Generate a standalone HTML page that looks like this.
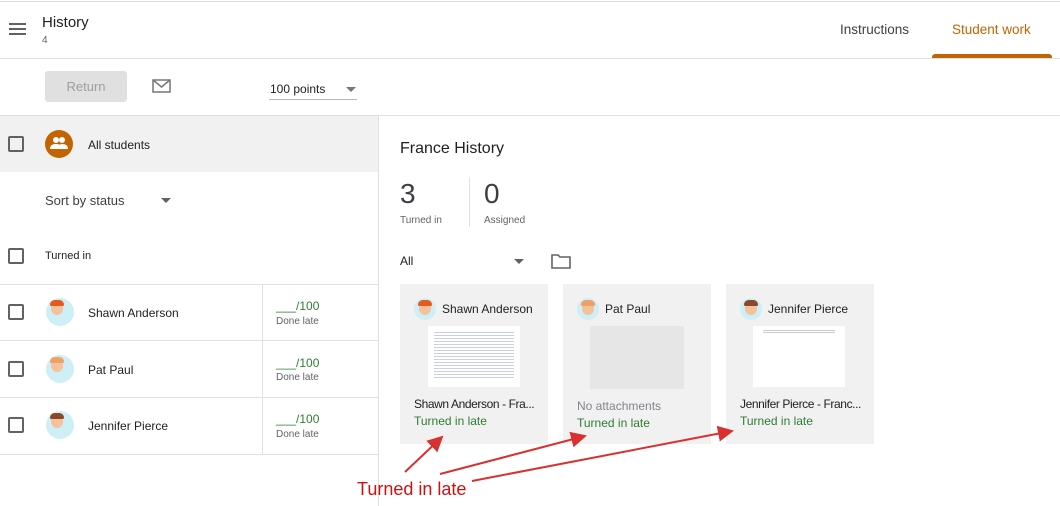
<!DOCTYPE html>
<html><head><meta charset="utf-8"><style>
*{margin:0;padding:0;box-sizing:border-box}
body{width:1060px;height:506px;position:relative;overflow:hidden;background:#fff;font-family:"Liberation Sans",sans-serif;color:#202124}
.a{position:absolute}
.cb{position:absolute;width:16px;height:16px;border:2px solid #5f6368;border-radius:2px}
.t{font-size:12px}
.card{position:absolute;top:284px;width:148px;height:160px;background:#f1f1f1}
.av{position:absolute;width:22px;height:22px;border-radius:50%;background:#cdeff5;overflow:hidden}
.av:before{content:"";position:absolute;left:5px;top:4px;width:12px;height:13px;border-radius:50%;background:#f4c19a}
.av:after{content:"";position:absolute;left:4px;top:2px;width:14px;height:6px;border-radius:7px 7px 2px 2px;background:var(--h)}
.green{color:#2e7d32}
</style></head><body>
<div class="a" style="left:0;top:1px;width:1060px;height:1px;background:#ddd"></div>
<div class="a" style="left:9px;top:23px;width:17px;height:2px;background:#5f6368;box-shadow:0 5px 0 #5f6368,0 10px 0 #5f6368"></div>
<div class="a" style="left:42px;top:14px;font-size:15px">History</div>
<div class="a" style="left:42px;top:35px;font-size:10px;color:#5f6368">4</div>
<div class="a" style="left:840px;top:22px;font-size:13.5px;color:#3c4043">Instructions</div>
<div class="a" style="left:952px;top:22px;font-size:13.5px;color:#c26401">Student work</div>
<div class="a" style="left:932px;top:54px;width:120px;height:4px;background:#c26401;border-radius:3px 3px 0 0"></div>
<div class="a" style="left:0;top:58px;width:1060px;height:1px;background:#e0e0e0"></div>
<div class="a" style="left:45px;top:71px;width:82px;height:31px;background:#e0e0e0;border-radius:3px;color:#9e9e9e;font-size:13px;text-align:center;line-height:31px">Return</div>
<svg class="a" style="left:152px;top:79px" width="19" height="14" viewBox="0 0 19 14"><rect x="1" y="1" width="17" height="12" fill="none" stroke="#777" stroke-width="1.5"/><path d="M1 1l8.5 7L18 1" fill="none" stroke="#777" stroke-width="1.5"/></svg>
<div class="a" style="left:270px;top:82px;font-size:12px">100 points</div>
<div class="a" style="left:346px;top:87px;border:5px solid transparent;border-top-color:#777;border-bottom:0"></div>
<div class="a" style="left:269px;top:99px;width:88px;height:1px;background:#bbb"></div>
<div class="a" style="left:0;top:115px;width:1060px;height:1px;background:#e0e0e0"></div>
<div class="a" style="left:378px;top:115px;width:1px;height:391px;background:#e0e0e0"></div>
<div class="a" style="left:0;top:116px;width:378px;height:56px;background:#f1f1f1"></div>
<div class="cb" style="left:8px;top:136px"></div>
<div class="a" style="left:45px;top:130px;width:28px;height:28px;border-radius:50%;background:#c26401"></div>
<svg class="a" style="left:50px;top:136px" width="18" height="14" viewBox="0 0 18 14"><circle cx="6" cy="4" r="3" fill="#fff"/><circle cx="12" cy="4" r="3" fill="#fff"/><path d="M0 13c0-4 3-5 6-5s6 1 6 5zM8 13c0-4 2-5 4-5 3 0 6 1 6 5z" fill="#fff"/></svg>
<div class="a t" style="left:88px;top:138px">All students</div>
<div class="a" style="left:45px;top:193px;font-size:13px;color:#3c4043">Sort by status</div>
<div class="a" style="left:161px;top:198px;border:5px solid transparent;border-top-color:#5f6368;border-bottom:0"></div>
<div class="cb" style="left:8px;top:248px"></div>
<div class="a t" style="left:45px;top:250px;font-size:11px">Turned in</div>
<div class="a" style="left:0;top:284px;width:378px;height:1px;background:#e0e0e0"></div>
<div class="a" style="left:0;top:340px;width:378px;height:1px;background:#e0e0e0"></div>
<div class="a" style="left:0;top:397px;width:378px;height:1px;background:#e0e0e0"></div>
<div class="a" style="left:0;top:454px;width:378px;height:1px;background:#e0e0e0"></div>
<div class="a" style="left:262px;top:285px;width:1px;height:169px;background:#e0e0e0"></div>
<div class="cb" style="left:8px;top:304px"></div><div class="cb" style="left:8px;top:361px"></div><div class="cb" style="left:8px;top:417px"></div>
<div class="av" style="left:46px;top:298px;width:28px;height:28px;--h:#e65a1e"></div>
<div class="av" style="left:46px;top:355px;width:28px;height:28px;--h:#f0a064"></div>
<div class="av" style="left:46px;top:411px;width:28px;height:28px;--h:#8a4a2a"></div>
<div class="a t" style="left:88px;top:306px">Shawn Anderson</div>
<div class="a t" style="left:88px;top:363px">Pat Paul</div>
<div class="a t" style="left:88px;top:419px">Jennifer Pierce</div>
<div class="a t green" style="left:276px;top:299px">___/100</div><div class="a" style="left:276px;top:316px;font-size:10px;color:#5f6368">Done late</div>
<div class="a t green" style="left:276px;top:356px">___/100</div><div class="a" style="left:276px;top:372px;font-size:10px;color:#5f6368">Done late</div>
<div class="a t green" style="left:276px;top:412px">___/100</div><div class="a" style="left:276px;top:429px;font-size:10px;color:#5f6368">Done late</div>
<div class="a" style="left:400px;top:140px;font-size:16px">France History</div>
<div class="a" style="left:400px;top:178px;font-size:28px;color:#3c4043">3</div>
<div class="a" style="left:400px;top:215px;font-size:10px;color:#5f6368">Turned in</div>
<div class="a" style="left:469px;top:177px;width:1px;height:50px;background:#e0e0e0"></div>
<div class="a" style="left:484px;top:178px;font-size:28px;color:#3c4043">0</div>
<div class="a" style="left:484px;top:215px;font-size:10px;color:#5f6368">Assigned</div>
<div class="a" style="left:400px;top:254px;font-size:12px">All</div>
<div class="a" style="left:514px;top:259px;border:5px solid transparent;border-top-color:#5f6368;border-bottom:0"></div>
<svg class="a" style="left:551px;top:253px" width="20" height="16" viewBox="0 0 20 16"><path d="M1 2h6l2 2h10v11H1z" fill="none" stroke="#5f6368" stroke-width="1.6"/></svg>
<div class="card" style="left:400px"></div><div class="card" style="left:563px"></div><div class="card" style="left:726px"></div>
<div class="av" style="left:414px;top:298px;--h:#e65a1e"></div>
<div class="av" style="left:577px;top:298px;--h:#f0a064"></div>
<div class="av" style="left:740px;top:298px;--h:#8a4a2a"></div>
<div class="a t" style="left:442px;top:302px">Shawn Anderson</div>
<div class="a t" style="left:605px;top:302px">Pat Paul</div>
<div class="a t" style="left:768px;top:302px">Jennifer Pierce</div>
<div class="a" style="left:428px;top:326px;width:92px;height:61px;background:#fff;padding:4px 6px"><div style="height:50px;background:repeating-linear-gradient(#fff 0 2px,#c7cfe0 2px 3px)"></div></div>
<div class="a" style="left:590px;top:326px;width:94px;height:63px;background:#e6e6e6"></div>
<div class="a" style="left:753px;top:326px;width:92px;height:61px;background:#fff;padding:3px 10px"><div style="height:4px;background:repeating-linear-gradient(#fff 0 1px,#ccc 1px 2px)"></div></div>
<div class="a t" style="left:414px;top:397px;letter-spacing:-0.4px">Shawn Anderson - Fra...</div>
<div class="a t" style="left:577px;top:399px;color:#80868b">No attachments</div>
<div class="a t" style="left:740px;top:397px;letter-spacing:-0.4px">Jennifer Pierce - Franc...</div>
<div class="a t green" style="left:414px;top:414px">Turned in late</div>
<div class="a t green" style="left:577px;top:416px">Turned in late</div>
<div class="a t green" style="left:740px;top:414px">Turned in late</div>
<svg class="a" style="left:0;top:0" width="1060" height="506"><defs><marker id="m" markerWidth="8" markerHeight="8" refX="7" refY="4" orient="auto"><path d="M0 0L8 4L0 8z" fill="#d93030"/></marker></defs>
<g stroke="#d93030" stroke-width="2" fill="none" marker-end="url(#m)"><path d="M405 472L442 437"/><path d="M440 474L585 436"/><path d="M472 481L732 431"/></g></svg>
<div class="a" style="left:357px;top:479px;font-size:18px;color:#cc1111">Turned in late</div>
</body></html>
